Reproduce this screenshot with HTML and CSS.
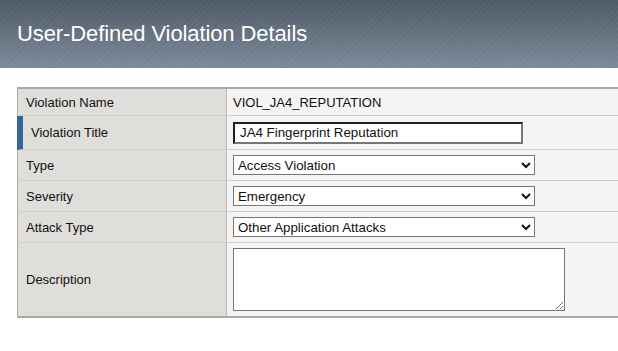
FILE: index.html
```html
<!DOCTYPE html>
<html>
<head>
<meta charset="utf-8">
<link rel="stylesheet" href="styles.css">
</head>
<body>
<div class="header"><h1 class="title">User-Defined Violation Details</h1></div>
<div class="content">
  <div class="details">
    <div class="label row-name">Violation Name</div>
    <div class="value row-name">VIOL_JA4_REPUTATION</div>

    <div class="label required row-title">Violation Title</div>
    <div class="value row-title"><input class="text" type="text" value="JA4 Fingerprint Reputation"></div>

    <div class="label row-sel">Type</div>
    <div class="value row-sel"><select class="sel"><option>Access Violation</option></select></div>

    <div class="label row-sel">Severity</div>
    <div class="value row-sel"><select class="sel"><option>Emergency</option></select></div>

    <div class="label row-sel">Attack Type</div>
    <div class="value row-sel"><select class="sel"><option>Other Application Attacks</option></select></div>

    <div class="label row-desc last">Description</div>
    <div class="value row-desc last"><textarea class="area"></textarea></div>
  </div>
</div>
</body>
</html>
```
FILE: styles.css
```css
html, body {
  margin: 0;
  padding: 0;
  background: #ffffff;
  font-family: "Liberation Sans", Arial, sans-serif;
}
.header {
  height: 68px;
  box-sizing: border-box;
  padding: 0 17px;
  display: flex;
  align-items: center;
  background:
    repeating-linear-gradient(135deg, rgba(255,255,255,0.035) 0 2px, rgba(0,0,0,0) 2px 4px),
    linear-gradient(to bottom, #4d5866 0%, #64707e 50%, #7b8a99 100%);
}
.title {
  margin: 0;
  padding-bottom: 1px;
  color: #ffffff;
  font-weight: normal;
  font-size: 22px;
  letter-spacing: -0.1px;
}
.content {
  padding: 19px 0 0 17px;
}
.details {
  width: 601px;
  display: grid;
  grid-template-columns: 210px 1fr;
  font-size: 13px;
  color: #111;
  border-top: 2px solid #a8a8a8;
  border-bottom: 2px solid #a8a8a8;
}
.label, .value {
  display: flex;
  align-items: center;
  box-sizing: border-box;
  border-bottom: 1px solid #cfcfcd;
}
.last {
  border-bottom: none;
}
.label {
  padding-left: 8px;
  background: #dfdedb;
  border-left: 1px solid #a8a8a8;
  border-right: 1px solid #b8b8b6;
}
.label.required {
  border-left: 6px solid #336699;
  padding-left: 8px;
}
.value {
  background: #f5f4f2;
  padding-left: 6px;
}
.row-name { height: 27px; }
.row-title { height: 34px; }
.row-sel { height: 31px; }
.row-desc { height: 73px; }
.text {
  display: block;
  box-sizing: border-box;
  width: 290px;
  height: 22px;
  margin: 0;
  padding: 0 0 0 5px;
  border-style: solid;
  border-width: 2px;
  border-color: #1e1e1e #777777 #777777 #1e1e1e;
  background: #fff;
  font-family: "Liberation Sans", Arial, sans-serif;
  font-size: 13.3px;
  color: #111;
  outline: none;
}
.sel {
  display: block;
  box-sizing: border-box;
  width: 302px;
  height: 20px;
  margin: 0;
  padding: 0;
  border: 1px solid #767676;
  border-radius: 0;
  background: #fff;
  font-family: "Liberation Sans", Arial, sans-serif;
  font-size: 13.3px;
  color: #111;
}
.area {
  display: block;
  box-sizing: border-box;
  width: 332px;
  height: 63px;
  margin: 0;
  border: 1px solid #767676;
  background: #fff;
  font-family: "Liberation Sans", Arial, sans-serif;
  font-size: 13px;
}
```
